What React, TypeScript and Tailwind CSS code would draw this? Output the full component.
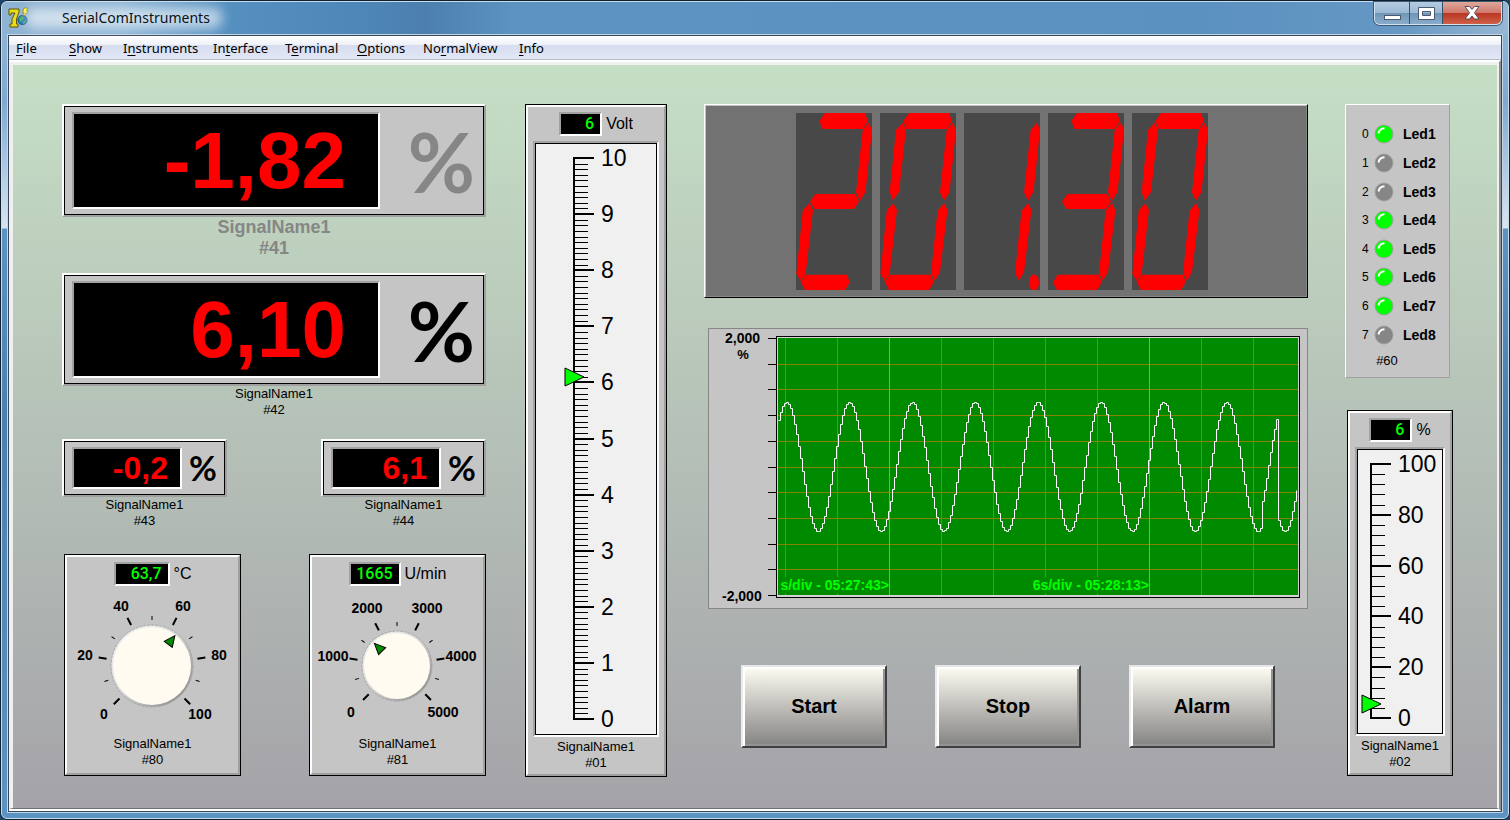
import React from "react";

const menus: { before: string; key: string; after: string; className?: string }[] = [
  { before: "", key: "F", after: "ile", className: "w-[53px]" },
  { before: "", key: "S", after: "how", className: "w-[54px]" },
  { before: "I", key: "n", after: "struments", className: "w-[90px]" },
  { before: "In", key: "t", after: "erface", className: "w-[72px]" },
  { before: "T", key: "e", after: "rminal", className: "w-[72px]" },
  { before: "", key: "O", after: "ptions", className: "w-[66px]" },
  { before: "No", key: "r", after: "malView", className: "w-[96px]" },
  { before: "", key: "I", after: "nfo", className: "w-[40px]" },
];

function AppIcon() {
  return (
    <svg width="22" height="22" viewBox="0 0 22 22" aria-hidden="true">
      <circle cx="14.5" cy="13" r="4.6" fill="#1d6fb8" stroke="#123f63" strokeWidth="0.8" />
      <path d="M11 11l3-2 2 2-2 3-2 1zM15 15l3-2-1 3-2 1z" fill="#3fae5a" />
      <path d="M1 2h10v3L8.5 12v5H10v3H2v-3h2v-5l3-6H3v2H1z" fill="#e8dc1c" stroke="#5d5500" strokeWidth="1" />
      <path d="M16 1h4l-1.500 3H20l-5 6 1-4.500h-1.500z" fill="#fff23a" stroke="#7b7200" strokeWidth="0.7" />
    </svg>
  );
}

function TitleBar() {
  return (
    <header className="flex h-8 items-start justify-between rounded-t-md bg-[linear-gradient(90deg,#8fb2d2_0%,#8db5d6_8%,#5590c0_15%,#4d87b8_24%,#4c7fae_28%,#5c93c1_34%,#5b91c0_80%,#6698c4_93%,#96b7d4_100%)] pr-1.5">
      <div className="flex h-8 items-center pl-1.5">
        <AppIcon />
        <div className="relative ml-8 font-['Noto_Sans',sans-serif] text-sm text-[#0b1018]">
          <div className="absolute -inset-x-3 -left-9 inset-y-0 rounded-lg bg-white/60 blur-[6px]" />
          <h1 className="relative">SerialComInstruments</h1>
        </div>
      </div>
      <div className="flex h-[23px] overflow-hidden rounded-b-md border border-t-0 border-[#d3e2ef] shadow-[0_0_0_1px_#3d5a75]">
        <button aria-label="Minimize" className="flex w-[35px] items-center justify-center border-r border-[#33516c] bg-[linear-gradient(#b4cbe0_0%,#9db9d3_48%,#6d94b7_50%,#8aaccb_100%)]">
          <svg width="19" height="17" viewBox="0 0 19 17">
            <rect x="1.500" y="10.500" width="16" height="4" fill="#fff" stroke="#4c5a70" />
          </svg>
        </button>
        <button aria-label="Maximize" className="flex w-[33px] items-center justify-center border-r border-[#33516c] bg-[linear-gradient(#b4cbe0_0%,#9db9d3_48%,#6d94b7_50%,#8aaccb_100%)]">
          <svg width="19" height="17" viewBox="0 0 19 17">
            <path d="M1.500 2.500h16v12h-16zM5.500 6.500v4h8v-4z" fill="#fff" fillRule="evenodd" stroke="#4c5a70" />
          </svg>
        </button>
        <button aria-label="Close" className="flex w-[58px] items-center justify-center bg-[linear-gradient(#dfa79c_0%,#cf7a6b_48%,#b93522_50%,#cf6148_100%)]">
          <svg width="18" height="16" viewBox="0 0 18 16">
            <path d="M2 1.500h4.500L9 4.500l2.500-3H16L11.500 7.800 16 14h-4.500L9 11l-2.500 3H2l4.500-6.200z" fill="#fff" stroke="#5a4d5c" />
          </svg>
        </button>
      </div>
    </header>
  );
}

function MenuBar() {
  return (
    <nav className="flex h-6 items-center border-b border-[#b6bccc] bg-[linear-gradient(#ffffff_0%,#eef1f8_38%,#d6ddef_40%,#e2e7f5_100%)] pt-0.5 pl-[7px] font-['Noto_Sans',sans-serif] text-[13px] text-black">
      {menus.map((m) => (
        <button key={m.before + m.key + m.after} className={"text-left " + m.className}>
          {m.before}
          <span className="underline underline-offset-2">{m.key}</span>
          {m.after}
        </button>
      ))}
    </nav>
  );
}

function Sunken({ className, children }: { className: string; children: React.ReactNode }) {
  return (
    <div className={"flex items-center justify-end border-2 border-t-[#a2a2a2] border-r-white border-b-white border-l-[#a2a2a2] bg-black " + className}>
      {children}
    </div>
  );
}

function Caption({ id, large }: { id: string; large?: boolean }) {
  return (
    <div className={large ? "text-center text-lg leading-[21px] font-bold text-[#868686]" : "text-center text-[13px] leading-4 text-black"}>
      <p>SignalName1</p>
      <p>{id}</p>
    </div>
  );
}

function Readout({ value, id, big, muted }: { value: string; id: string; big?: boolean; muted?: boolean }) {
  return (
    <section className={big ? "w-full" : "w-[165px]"}>
      <div className="border-2 border-t-white border-r-[#a0a0a0] border-b-[#a0a0a0] border-l-white">
        <div className="flex border border-black bg-[#c5c5c5] py-[5px] pl-[7px]">
          <Sunken className={big ? "h-[97px] w-[308px] pr-8" : "h-[42px] w-[110px] pr-3"}>
            <span className={big ? "text-[80px] leading-none font-bold text-[#ff0000]" : "text-[32px] leading-none font-bold text-[#ff0000]"}>{value}</span>
          </Sunken>
          <div
            className={
              "flex flex-1 items-center font-['Lato',sans-serif] leading-none font-bold " +
              (big ? "justify-end pr-2 text-[82px] " : "justify-center text-[34px] ") +
              (muted ? "text-[#868686]" : "text-black")
            }
          >
            %
          </div>
        </div>
      </div>
      <Caption id={id} large={muted} />
    </section>
  );
}

function LcdRow({ value, unit, lcd }: { value: string; unit: string; lcd: string }) {
  return (
    <div className="flex items-center justify-center gap-1">
      <Sunken className={"h-6 pr-1.5 font-['Roboto',sans-serif] text-base font-medium text-[#00ff00] " + lcd}>{value}</Sunken>
      <span className="text-base leading-6 text-black">{unit}</span>
    </div>
  );
}

const raised = "border border-black bg-[#c5c5c5]";
const raisedInner = "border-2 border-t-white border-r-[#a0a0a0] border-b-[#a0a0a0] border-l-white";

type KnobLabel = { text: string; x: number; y: number };

function Knob({ value, unit, id, lcd, angle, r, labels }: { value: string; unit: string; id: string; lcd: string; angle: number; r: number; labels: KnobLabel[] }) {
  const ticks = Array.from({ length: 11 }, (_, i) => i);
  return (
    <section className={raised}>
      <div className={raisedInner + " py-[5px]"}>
        <LcdRow value={value} unit={unit} lcd={lcd} />
        <svg width="171" height="150" viewBox="-85 -80 171 150" className="block">
          <defs>
            <linearGradient id={"bevel" + r} x1="0.15" y1="0.15" x2="0.85" y2="0.85">
              <stop offset="0" stopColor="#efefef" />
              <stop offset="0.45" stopColor="#d8d8d8" />
              <stop offset="1" stopColor="#959595" />
            </linearGradient>
          </defs>
          {ticks.map((i) => {
            const major = i % 2 === 0;
            return (
              <line
                key={i}
                x1="0"
                x2="0"
                y1={-(r + 5)}
                y2={-(r + (major ? 13 : 9))}
                stroke="#000"
                strokeWidth={major ? 2 : 1}
                transform={"rotate(" + (-135 + i * 27) + ")"}
              />
            );
          })}
          <circle r={r} fill={"url(#bevel" + r + ")"} stroke="#a6a6a6" strokeWidth="1" strokeDasharray="3 1" />
          <circle r={r - 2} fill="#fffbf1" />
          <path d={"M0 " + -(r - 3) + "L5 " + -(r - 14) + "H-5Z"} fill="#008a00" stroke="#000" strokeWidth="1" transform={"rotate(" + angle + ")"} />
          {labels.map((l) => (
            <text key={l.text} x={l.x} y={l.y + 5} textAnchor="middle" fontSize="14" fontWeight="700">
              {l.text}
            </text>
          ))}
        </svg>
        <Caption id={id} />
      </div>
    </section>
  );
}

type ScaleProps = {
  unit: string;
  id: string;
  width: number;
  height: number;
  axis: number;
  top: number;
  length: number;
  majors: string[];
  minorCount: number;
  ratio: number;
};

function Slider({ unit, id, width, height, axis, top, length, majors, minorCount, ratio }: ScaleProps) {
  const total = (majors.length - 1) * minorCount;
  const pointer = Math.round(top + length * (1 - ratio));
  return (
    <section className={raised}>
      <div className={raisedInner + " px-[5px] pt-[5px] pb-[3px]"}>
        <LcdRow value="6" unit={unit} lcd="w-[43px]" />
        <div className="mt-[5px] mb-0.5 border-2 border-t-[#a2a2a2] border-r-white border-b-white border-l-[#a2a2a2]">
          <svg width={width} height={height} viewBox={"0 0 " + width + " " + height} className="box-content block border border-black bg-[#f0f0f0]">
            <rect x={axis} y={top} width="2" height={length + 1} />
            {Array.from({ length: total + 1 }, (_, i) => {
              const y = Math.round(top + (length * i) / total);
              const major = i % minorCount === 0;
              return <rect key={i} x={axis} y={major ? y - 1 : y} width={major ? 21 : 15} height={major ? 2 : 1} />;
            })}
            {majors.map((m, i) => (
              <text key={m} x={axis + 28} y={Math.round(top + (length * i) / (majors.length - 1)) + 8} fontSize="23">
                {m}
              </text>
            ))}
            <path d={"M" + (axis - 8) + " " + (pointer - 9) + "v18l19-9z"} fill="#00ff00" stroke="#000" strokeWidth="1" />
          </svg>
        </div>
        <Caption id={id} />
      </div>
    </section>
  );
}

const segments: Record<string, string> = {
  a: "29,0 69,0 72,8 67,16 26.500,16 23.300,8",
  b: "72.700,9.700 76,16.500 69.500,79 64,87.700 60,79.300 66.700,17",
  c: "64,90 67.500,97 60,159 55,167.700 51,160.300 57.500,98",
  d: "9,177 49,177 53.800,169.300 51,161.700 9.600,161.700 4.800,169.300",
  e: "13.300,90.300 17,97 9.600,161.300 4.400,168 0.400,160.300 6.800,97",
  f: "22.500,9.700 26,16.500 19,79 13,87.700 9.600,79 16,17",
  g: "19.300,81 59.500,81 63,88.700 58,96 18.500,96 14,88.700",
};

const digits = [
  { on: "abged", point: false },
  { on: "abcdef", point: false },
  { on: "bc", point: true },
  { on: "abgcd", point: false },
  { on: "abcdef", point: false },
];

function SegmentDisplay() {
  return (
    <section className="border border-t-white border-r-black border-b-black border-l-white">
      <div role="img" aria-label="201.30" className="flex justify-center gap-2 border border-t-[#c0c0c0] border-r-[#888888] border-b-[#888888] border-l-[#c0c0c0] bg-[#727272] pt-[7px] pr-2 pb-1.5">
        {digits.map((d, i) => (
          <svg key={i} width="76" height="177" viewBox="0 0 76 177" className="block bg-[#484848]">
            {d.on.split("").map((s) => (
              <polygon key={s} points={segments[s]} fill="#ff0000" />
            ))}
            {d.point && <ellipse cx="70" cy="169.500" rx="5" ry="8" fill="#ff0000" />}
          </svg>
        ))}
      </div>
    </section>
  );
}

function wave(x: number) {
  let trough = 108;
  if (x >= 569) trough = 575;
  else if (x >= 552) trough = 543;
  return Math.round(137.500 + 64.500 * Math.cos((2 * Math.PI * (x - trough)) / 62.860)) + 0.5;
}

function Trace() {
  let d = "M69.500 " + wave(69);
  for (let x = 71; x <= 588; x += 2) d += "H" + (x + 0.5) + "V" + wave(x);
  return <path d={d} fill="none" stroke="#fff" strokeWidth="1" />;
}

function Chart() {
  const rows = Array.from({ length: 11 }, (_, i) => Math.round(9 + i * 25.700));
  const cols = Array.from({ length: 10 }, (_, i) => 76 + i * 52);
  return (
    <section className="ml-1 border border-[#868686] bg-[#c5c5c5]">
      <svg viewBox="0 0 598 279" className="block w-full">
        <rect x="67.500" y="7.500" width="523" height="261" fill="#d4d4d4" stroke="#000" />
        <rect x="69" y="9" width="520" height="257" fill="#008a00" />
        {rows.map((y) => (
          <rect key={y} x="59" y={y} width="9" height="1" />
        ))}
        {rows.slice(1, 10).map((y) => (
          <rect key={y} x="69" y={y} width="520" height="1" fill="#848400" />
        ))}
        {cols.map((x, i) => (
          <rect key={x} x={x} y="9" width="1" height="257" fill={i === 2 || i === 7 ? "#00ff00" : "#848400"} />
        ))}
        <rect x="69" y="248" width="111" height="16" fill="#008a00" />
        <rect x="321" y="248" width="119" height="16" fill="#008a00" />
        <Trace />
        <g fontSize="14" fontWeight="700">
          <text x="16" y="14">2,000</text>
          <text x="34" y="30" textAnchor="middle" fontSize="13">%</text>
          <text x="13" y="272">-2,000</text>
          <g fill="#00ff00" textAnchor="end">
            <text x="180" y="261">s/div - 05:27:43&gt;</text>
            <text x="440" y="261">6s/div - 05:28:13&gt;</text>
          </g>
        </g>
      </svg>
    </section>
  );
}

function ActionButton({ children }: { children: string }) {
  return (
    <button className="h-[83px] w-[146px] border-2 border-t-[#e6e6e6] border-r-[#3f3f3f] border-b-[#3f3f3f] border-l-[#ececec] bg-linear-to-b from-[#fffdf3] to-[#848484] pb-0.5 text-xl font-bold text-black shadow-[inset_2px_2px_0_#ffffff,inset_-2px_-2px_0_#939393]">
      {children}
    </button>
  );
}

const leds = [true, false, false, true, true, true, true, false];

function LedPanel() {
  return (
    <section className="w-[105px] border border-t-white border-r-[#a0a0a0] border-b-[#a0a0a0] border-l-white bg-[#c5c5c5] pt-[15px] pb-2">
      <ul className="flex h-[229px] flex-col pl-4">
        {leds.map((on, i) => (
          <li key={i} className="flex flex-1 items-center text-sm text-black">
            <span className="w-3 text-xs">{i}</span>
            <svg width="20" height="20" viewBox="0 0 20 20" className="mr-[9px]">
              <circle cx="10" cy="10" r="9" fill={on ? "#00ff00" : "#868686"} stroke="#a0a0a0" strokeWidth="1" />
              <path d="M4.500 9.500C5 6.500 7 4.500 10.500 4.300" fill="none" stroke="#fff" strokeWidth="2" />
            </svg>
            <span className="font-bold">Led{i + 1}</span>
          </li>
        ))}
      </ul>
      <p className="mt-1 pr-[21px] text-center text-[13px] leading-4 text-black">#60</p>
    </section>
  );
}

export default function App() {
  return (
    <div className="flex min-h-screen min-w-[1400px] flex-col bg-[#1b4468] font-['Liberation_Sans',Arial,sans-serif]">
      <div className="flex flex-1 flex-col rounded-lg border border-[#10202f]">
        <div className="flex flex-1 flex-col rounded-md border border-[#c9dcec] bg-[linear-gradient(#96b7d6_0px,#7fa9d2_100px,#d9e5f0_226px,#5b93c2_227px,#4a80b0_420px,#5b93c2_100%)]">
          <TitleBar />
          <div className="mx-[5px] mb-[5px] flex flex-1 flex-col border border-[#c3d6e6]">
            <div className="flex flex-1 flex-col border border-[#36475a]">
              <MenuBar />
              <div className="flex flex-1 flex-col border-t-2 border-r-2 border-b-2 border-t-white border-r-[#909090] border-b-white">
                <main className="flex flex-1 items-start gap-[37px] border-t-[3px] border-r-2 border-b border-l-4 border-t-[#f0f0f0] border-r-[#f0f0f0] border-b-[#707070] border-l-[#f0f0f0] bg-linear-to-b from-[#c5dfc5] to-[#a5a3a9] pt-[39px] pr-11 pb-[30px] pl-[49px]">
                  <div className="w-[426px] shrink-0 pr-0.5">
                    <Readout value="-1,82" id="#41" big muted />
                    <div className="mt-3.5">
                      <Readout value="6,10" id="#42" big />
                    </div>
                    <div className="mt-[21px] flex justify-between">
                      <Readout value="-0,2" id="#43" />
                      <Readout value="6,1" id="#44" />
                    </div>
                    <div className="mt-[25px] flex justify-between pl-0.5">
                      <Knob
                        value="63,7"
                        unit="°C"
                        id="#80"
                        lcd="w-[56px]"
                        angle={37}
                        r={41}
                        labels={[
                          { text: "0", x: -48, y: 48 },
                          { text: "20", x: -67, y: -11 },
                          { text: "40", x: -31, y: -60 },
                          { text: "60", x: 31, y: -60 },
                          { text: "80", x: 67, y: -11 },
                          { text: "100", x: 48, y: 48 },
                        ]}
                      />
                      <Knob
                        value="1665"
                        unit="U/min"
                        id="#81"
                        lcd="w-[52px]"
                        angle={-45}
                        r={35}
                        labels={[
                          { text: "0", x: -46, y: 46 },
                          { text: "1000", x: -64, y: -10 },
                          { text: "2000", x: -30, y: -58 },
                          { text: "3000", x: 30, y: -58 },
                          { text: "4000", x: 64, y: -10 },
                          { text: "5000", x: 46, y: 46 },
                        ]}
                      />
                    </div>
                  </div>

                  <Slider
                    unit="Volt"
                    id="#01"
                    width={120}
                    height={590}
                    axis={37}
                    top={14}
                    length={561}
                    majors={["10", "9", "8", "7", "6", "5", "4", "3", "2", "1", "0"]}
                    minorCount={10}
                    ratio={0.61}
                  />

                  <div className="flex-1">
                    <SegmentDisplay />
                    <div className="mt-[30px]">
                      <Chart />
                    </div>
                    <div className="mt-14 flex gap-12 pl-[37px]">
                      <ActionButton>Start</ActionButton>
                      <ActionButton>Stop</ActionButton>
                      <ActionButton>Alarm</ActionButton>
                    </div>
                  </div>

                  <div className="flex w-[108px] shrink-0 flex-col gap-8">
                    <LedPanel />
                    <div className="self-end">
                      <Slider
                        unit="%"
                        id="#02"
                        width={84}
                        height={283}
                        axis={12}
                        top={14}
                        length={254}
                        majors={["100", "80", "60", "40", "20", "0"]}
                        minorCount={5}
                        ratio={0.057}
                      />
                    </div>
                  </div>
                </main>
              </div>
            </div>
          </div>
        </div>
      </div>
    </div>
  );
}
